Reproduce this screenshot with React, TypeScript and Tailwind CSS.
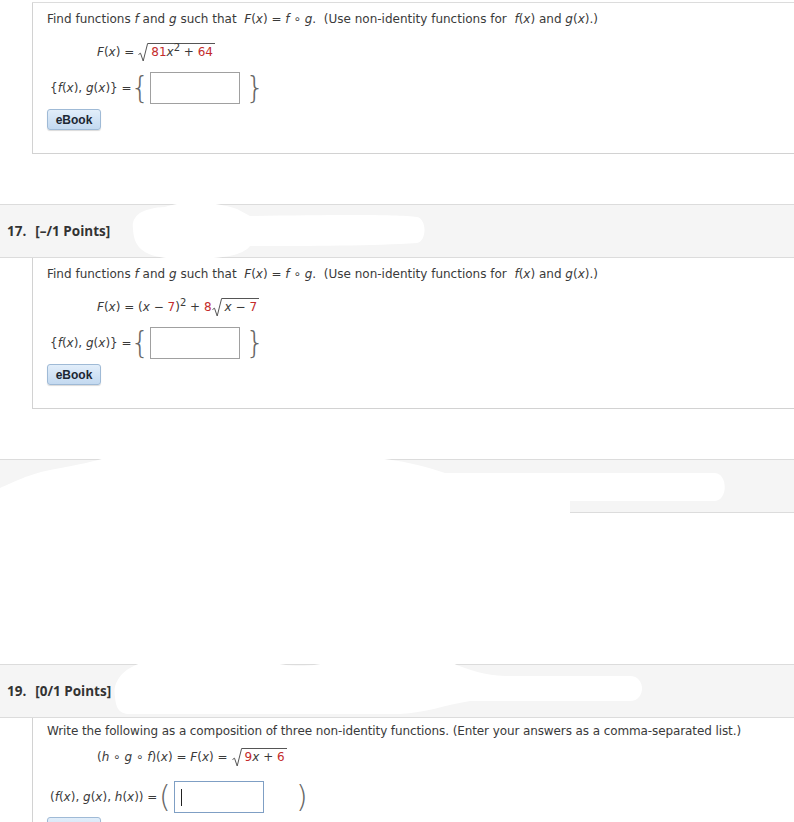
import React from 'react'

const body = { fontFamily: '"DejaVu Sans", Verdana, sans-serif' }

const Red = ({ children }: { children: React.ReactNode }) => (
  <span className="text-[#c42b2b]">{children}</span>
)

const I = ({ children }: { children: React.ReactNode }) => <span className="italic">{children}</span>

const Sqrt = ({ children }: { children: React.ReactNode }) => (
  <span className="inline-flex items-stretch align-middle">
    <svg width="10" height="19" viewBox="0 0 10 19" className="shrink-0">
      <path d="M0.5 11.5 L2.5 10.2 L5.2 18 L9.6 0.5 L10 0.5" stroke="#555" strokeWidth="1" fill="none" />
    </svg>
    <span className="border-t border-[#555] pl-[3px] pr-[2px] leading-[17px]">{children}</span>
  </span>
)

const EBook = () => (
  <button
    className="h-[21px] w-[54px] rounded-[3px] border border-[#9fbad6] bg-gradient-to-b from-[#e2eefa] to-[#c3d9f0] text-[12px] font-bold text-[#1d2733] shadow-[0_1px_1px_rgba(0,0,0,0.15)]"
    style={{ fontFamily: '"Liberation Sans", Arial, sans-serif' }}
  >
    eBook
  </button>
)

// big thin bracket next to the answer box
const Brace = ({ children, className = '' }: { children: React.ReactNode; className?: string }) => (
  <span
    className={`inline-block w-[13px] text-center text-[30px] leading-[32px] text-[#666] ${className}`}
    style={{ fontFamily: '"DejaVu Sans", sans-serif', fontWeight: 200 }}
  >
    {children}
  </span>
)

const Header = ({ num, points, children }: { num?: string; points?: string; children?: React.ReactNode }) => (
  <div
    className="relative h-[54px] border-y border-[#dcdcdc] bg-[#f5f5f5] flex items-center pl-[7px] text-[13.5px] font-bold text-[#333]"
    style={{ fontFamily: '"Open Sans", sans-serif' }}
  >
    {num && <span>{num}</span>}
    {points && <span className="ml-[9px]">{points}</span>}
    {children}
  </div>
)

const FindFG = ({ formula }: { formula: React.ReactNode }) => (
  <div className="ml-[32px] border-l border-b border-[#d2d2d2] pl-[14px] pt-[7px] pb-[23px] text-[12px] text-[#3a3a3a]" style={body}>
    <div className="h-[18px] leading-[18px]">
      Find functions <I>f</I> and <I>g</I> such that&nbsp; <I>F</I>(<I>x</I>) = <I>f</I> ∘ <I>g</I>.&nbsp; (Use non-identity functions for&nbsp; <I>f</I>(<I>x</I>) and <I>g</I>(<I>x</I>).)
    </div>
    <div className="mt-[11px] h-[26px] pl-[50px] flex items-center gap-[4px] whitespace-pre">
      {formula}
    </div>
    <div className="mt-[6px] h-[34px] pl-[3px] flex items-center whitespace-pre">
      <span>
        {'{'}<I>f</I>(<I>x</I>), <I>g</I>(<I>x</I>){'}'} =
      </span>
      <Brace className="-ml-[1px]">{'{'}</Brace>
      <span className="ml-[6px] h-[32px] w-[90px] border border-[#a0a0a0] bg-white" />
      <Brace className="ml-[6px]">{'}'}</Brace>
    </div>
    <div className="mt-[4px]">
      <EBook />
    </div>
  </div>
)

export default function App() {
  return (
    <div className="w-[794px] h-[822px] overflow-hidden bg-white" style={body}>
      <div className="pt-[2px]">
        <div className="ml-[32px] border-t border-[#dcdcdc]" />
        <FindFG
          formula={
            <>
              <span>
                <I>F</I>(<I>x</I>) =
              </span>
              <Sqrt>
                <Red>81</Red>
                <I>x</I>
                <sup className="text-[10px]">2</sup> + <Red>64</Red>
              </Sqrt>
            </>
          }
        />
      </div>

      <div className="mt-[50px]">
        <Header num="17." points="[–/1 Points]">
          <svg className="absolute left-[125px] top-[-6px]" width="305" height="62" viewBox="0 0 305 62">
            <path
              d="M8 30 C6 16 18 9 40 8 C55 2 90 2 112 10 L125 17 C200 16 270 15 292 18 C302 20 302 42 292 44 C250 47 180 47 125 47 C118 56 100 60 60 60 C20 60 9 50 8 30 Z"
              fill="#fff"
            />
          </svg>
        </Header>
        <FindFG
          formula={
            <>
              <span>
                <I>F</I>(<I>x</I>) = (<I>x</I> − <Red>7</Red>)<sup className="text-[10px]">2</sup> + <Red>8</Red>
              </span>
              <span className="-ml-[4px]">
                <Sqrt>
                  <I>x</I> − <Red>7</Red>
                </Sqrt>
              </span>
            </>
          }
        />
      </div>

      <div className="mt-[50px]">
        <Header>
          <svg className="absolute left-0 top-[-2px]" width="794" height="160" viewBox="0 0 794 160">
            <path
              d="M0 30 C14 24 28 16 55 11 C78 7 95 3 105 0 L375 0 C400 2 425 8 445 15 L715 15 C728 16 728 42 715 43 L570 43 L570 160 L0 160 Z"
              fill="#fff"
            />
          </svg>
        </Header>
        <div className="h-[100px] flex items-end">
          <div className="ml-[75px] w-[82px] border-b border-[#cfcfcf]" />
        </div>
      </div>

      <div className="mt-[51px]">
        <Header num="19." points="[0/1 Points]">
          <svg className="absolute left-0 top-[-4px]" width="794" height="60" viewBox="0 0 794 60">
            <path
              d="M115 36 C112 20 124 6 145 1 L275 1 C280 6 320 6 325 1 L450 1 C470 10 485 14 505 15 L630 15 C646 15 646 40 630 40 L470 40 C445 44 425 52 400 53 L130 53 C118 53 116 46 115 36 Z"
              fill="#fff"
            />
          </svg>
        </Header>
        <div className="ml-[32px] border-l border-[#d2d2d2] pl-[14px] pt-[4px] pb-[23px] text-[12px] text-[#3a3a3a]">
          <div className="h-[18px] leading-[18px] tracking-[-0.1px]">
            Write the following as a composition of three non-identity functions. (Enter your answers as a comma-separated list.)
          </div>
          <div className="mt-[4px] h-[26px] pl-[50px] flex items-center gap-[4px] whitespace-pre">
            <span>
              (<I>h</I> ∘ <I>g</I> ∘ <I>f</I>)(<I>x</I>) = <I>F</I>(<I>x</I>) =
            </span>
            <Sqrt>
              <Red>9</Red>
              <I>x</I> + <Red>6</Red>
            </Sqrt>
          </div>
          <div className="mt-[10px] h-[34px] pl-[3px] flex items-center whitespace-pre">
            <span>
              (<I>f</I>(<I>x</I>), <I>g</I>(<I>x</I>), <I>h</I>(<I>x</I>)) =
            </span>
            <Brace className="ml-[1px]">(</Brace>
            <span className="ml-[3px] h-[32px] w-[90px] border border-[#7f9fc4] bg-white flex items-center pl-[6px]">
              <span className="h-[17px] w-[1px] bg-[#222]" />
            </span>
            <Brace className="ml-[31px]">)</Brace>
          </div>
          <div className="mt-[3px]">
            <EBook />
          </div>
        </div>
      </div>
    </div>
  )
}
